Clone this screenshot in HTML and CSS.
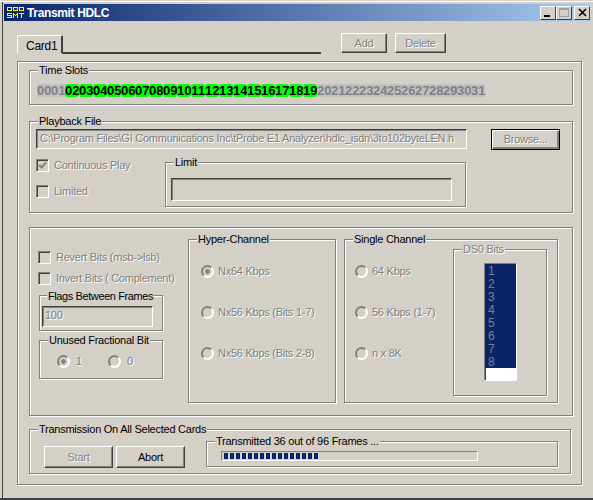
FILE: index.html
```html
<!DOCTYPE html>
<html lang="en">
<head>
<meta charset="utf-8">
<title>Transmit HDLC</title>
<link rel="stylesheet" href="styles.css">
</head>
<body>
<div class="window">
  <div class="titlebar">
    <svg class="logo" width="18" height="12" viewBox="0 0 18 12"><g fill="none" stroke="#ffff00" stroke-width="1"><rect x="0.5" y="0.5" width="4" height="3"/><rect x="6.5" y="0.5" width="4" height="3"/><rect x="12.5" y="0.5" width="4" height="3"/></g><path d="M0 6h5v1H1v1h4v3H0v-1h4V9H0zM6 6h1v1h1v1h1V7h1V6h1v5h-1V8H9v1H8V8H7v3H6zM12 6h5v1h-2v4h-1V7h-2z" fill="#ffff00"/></svg>
    <span class="title">Transmit HDLC</span>
    <div class="caption">
      <button class="cap"><span class="ic-min"></span></button>
      <button class="cap"><span class="ic-max"></span></button>
      <button class="cap cap-close"><svg width="9" height="9" viewBox="0 0 9 9"><path d="M1 1l7 7M8 1L1 8" stroke="#000" stroke-width="1.6" fill="none"/></svg></button>
    </div>
  </div>

  <div class="tabrow">
    <div class="tab">Card1</div>
    <div class="tabline"></div>
    <button class="btn dis btn-add">Add</button>
    <button class="btn dis btn-del">Delete</button>
  </div>

  <div class="pane etched">
    <section class="group g-time etched">
      <span class="label">Time Slots</span>
      <div class="slots">
        <span class="s off">00</span><span class="s off">01</span><span class="s on">02</span><span class="s on">03</span><span class="s on">04</span><span class="s on">05</span><span class="s on">06</span><span class="s on">07</span><span class="s on">08</span><span class="s on">09</span><span class="s on">10</span><span class="s on">11</span><span class="s on">12</span><span class="s on">13</span><span class="s on">14</span><span class="s on">15</span><span class="s on">16</span><span class="s on">17</span><span class="s on">18</span><span class="s on">19</span><span class="s off">20</span><span class="s off">21</span><span class="s off">22</span><span class="s off">23</span><span class="s off">24</span><span class="s off">25</span><span class="s off">26</span><span class="s off">27</span><span class="s off">28</span><span class="s off">29</span><span class="s off">30</span><span class="s off">31</span>
      </div>
    </section>

    <section class="group g-play etched">
      <span class="label">Playback File</span>
      <div class="play-top">
        <div class="input in-file dtext">C:\Program Files\GI Communications Inc\tProbe E1 Analyzer\hdlc_isdn\3to102byteLEN.h</div>
        <button class="btn dis btn-browse">Browse...</button>
      </div>
      <div class="play-bottom">
        <div class="checks">
          <div class="opt"><span class="cb"><svg width="9" height="9" viewBox="0 0 9 9"><path d="M1 4l2.5 2.5L8 1.500" stroke="#808080" stroke-width="2" fill="none"/></svg></span><span class="dtext">Continuous Play</span></div>
          <div class="opt"><span class="cb"></span><span class="dtext">Limited</span></div>
        </div>
        <div class="group g-limit etched">
          <span class="label">Limit</span>
          <div class="input in-limit"></div>
        </div>
      </div>
    </section>

    <section class="group g-opts etched">
      <div class="leftcol">
        <div class="opt"><span class="cb"></span><span class="dtext">Revert Bits (msb-&gt;lsb)</span></div>
        <div class="opt opt-2"><span class="cb"></span><span class="dtext">Invert Bits ( Complement)</span></div>
        <div class="group g-flags etched">
          <span class="label label-flags">Flags Between Frames</span>
          <div class="input in-flags dtext">100</div>
        </div>
        <div class="group g-unused etched">
          <span class="label">Unused Fractional Bit</span>
          <div class="fracs">
            <div class="opt opt-r1"><span class="rb sel"></span><span class="dtext">1</span></div>
            <div class="opt"><span class="rb"></span><span class="dtext">0</span></div>
          </div>
        </div>
      </div>
      <div class="group g-hyper etched">
        <span class="label">Hyper-Channel</span>
        <div class="radios">
          <div class="opt"><span class="rb sel"></span><span class="dtext">Nx64 Kbps</span></div>
          <div class="opt"><span class="rb"></span><span class="dtext">Nx56 Kbps (Bits 1-7)</span></div>
          <div class="opt"><span class="rb"></span><span class="dtext">Nx56 Kbps (Bits 2-8)</span></div>
        </div>
      </div>
      <div class="group g-single etched">
        <span class="label">Single Channel</span>
        <div class="radios r-single">
          <div class="opt"><span class="rb"></span><span class="dtext">64 Kbps</span></div>
          <div class="opt"><span class="rb"></span><span class="dtext">56 Kbps (1-7)</span></div>
          <div class="opt"><span class="rb"></span><span class="dtext">n x 8K</span></div>
        </div>
        <div class="group g-ds0 etched">
          <span class="label dtext">DS0 Bits</span>
          <ul class="list">
            <li>1</li><li>2</li><li>3</li><li>4</li><li>5</li><li>6</li><li>7</li><li>8</li>
          </ul>
        </div>
      </div>
    </section>

    <section class="group g-trans etched">
      <span class="label">Transmission On All Selected Cards</span>
      <button class="btn dis btn-start">Start</button>
      <button class="btn btn-abort">Abort</button>
      <div class="group g-prog etched">
        <span class="label">Transmitted 36 out of 96 Frames ...</span>
        <div class="progress"><div class="fill"></div></div>
      </div>
    </section>
  </div>
</div>
</body>
</html>
```
FILE: styles.css
```css
* { box-sizing: border-box; }
html, body { margin: 0; padding: 0; }
body {
  width: 593px;
  height: 500px;
  overflow: hidden;
  font-family: "Liberation Sans", Arial, sans-serif;
  font-size: 11px;
  letter-spacing: -0.25px;
  color: #000;
  background: #d4d0c8;
}
.window {
  width: 593px;
  height: 500px;
  padding: 4px 3px 0 3px;
  background: #d4d0c8;
  border-bottom: 2px solid #404040;
  box-shadow: inset 0 1px 0 #d4d0c8, inset 0 2px 0 #fff, inset 2px 0 0 #d4d0c8, inset 3px 0 0 #404040;
}
.titlebar {
  display: flex;
  align-items: center;
  height: 17px;
  margin-left: 1px;
  padding-left: 3px;
  background: linear-gradient(90deg, #0a246a, #a6caf0);
  color: #fff;
}
.logo { flex: none; }
.title { margin-left: 2px; font-weight: bold; font-size: 12px; letter-spacing: -0.35px; }
.caption { display: flex; margin-left: auto; }
.cap {
  display: flex;
  align-items: center;
  justify-content: center;
  width: 16px;
  height: 14px;
  padding: 0;
  border: 1px solid;
  border-color: #fff #404040 #404040 #fff;
  background: #d4d0c8;
}
.cap-close { margin-left: 2px; margin-right: 0; }
.ic-min { width: 6px; height: 2px; margin-top: 6px; margin-right: 2px; background: #000; }
.ic-max { width: 10px; height: 9px; border: 1px solid #a0a0a0; border-top-width: 2px; }

.tabrow {
  display: flex;
  align-items: flex-end;
  height: 21px;
  margin-top: 12px;
  margin-left: 14px;
}
.tab {
  width: 46px;
  height: 19px;
  padding: 4px 0 0 8px;
  line-height: 13px;
  font-size: 12px;
  border: 1px solid;
  border-color: #fff #404040 transparent #fff;
  border-right-width: 2px;
  border-radius: 2px 2px 0 0;
}
.tabline {
  width: 258px;
  height: 2px;
  background: #404040;
  margin-bottom: 0;
}
.btn {
  padding: 0;
  border: 1px solid;
  border-color: #fff #404040 #404040 #fff;
  box-shadow: inset -1px -1px 0 #808080;
  background: #d4d0c8;
  font: inherit;
  letter-spacing: inherit;
  color: #000;
  line-height: 13px;
}
.dis { color: #808080; text-shadow: 1px 1px 0 #fff; }
.btn-add { width: 46px; height: 20px; margin-left: 20px; align-self: flex-start; }
.btn-del { width: 51px; height: 20px; margin-left: 8px; align-self: flex-start; }

.etched {
  border: 1px solid #808080;
  box-shadow: 1px 1px 0 #fff, inset 1px 1px 0 #fff;
}
.pane {
  width: 565px;
  height: 424px;
  margin-top: 7px;
  margin-left: 14px;
  padding: 8px 0 0 11px;
}
.group { position: relative; }
.label {
  position: absolute;
  top: -7px;
  left: 8px;
  padding: 0 1px;
  background: #d4d0c8;
  line-height: 13px;
  white-space: nowrap;
}
.label-flags { top: -6px; left: 7px; letter-spacing: -0.4px; }
.dtext { color: #808080; text-shadow: 1px 1px 0 #fff; white-space: nowrap; }

.g-time { width: 544px; height: 35px; }
.slots {
  display: flex;
  margin: 13px 0 0 7px;
  font-weight: bold;
  font-size: 13px;
  letter-spacing: 0;
  line-height: 13px;
}
.s { width: 14px; height: 13px; text-align: center; }
.s.off { background: #c0c0c0; color: #808080; }
.s.on { background: #00ff00; color: #000; border-radius: 3px; }

.g-play { width: 544px; height: 92px; margin-top: 16px; }
.play-top { display: flex; align-items: flex-start; margin: 7px 0 0 6px; }
.input {
  border: 1px solid;
  border-color: #404040 #fff #fff #404040;
  box-shadow: inset 1px 1px 0 #808080;
  line-height: 17px;
  overflow: hidden;
}
.in-file { width: 431px; height: 20px; padding-left: 3px; }
.btn-browse {
  width: 69px;
  height: 21px;
  margin-left: 24px;
  outline: 1px solid #000;
  outline-offset: -1px;
  border-color: #fff #404040 #404040 #fff;
  box-shadow: inset 1px 1px 0 #fff, inset -2px -2px 0 #808080;
}
.play-bottom { display: flex; align-items: flex-start; margin: 9px 0 0 6px; }
.checks { display: flex; flex-direction: column; gap: 13px; width: 129px; }
.opt { display: flex; align-items: center; height: 13px; line-height: 13px; }
.cb {
  flex: none;
  display: flex;
  align-items: center;
  justify-content: center;
  width: 13px;
  height: 13px;
  margin-right: 5px;
  border: 1px solid;
  border-color: #808080 #fff #fff #808080;
  box-shadow: inset 1px 1px 0 #404040;
}
.rb {
  flex: none;
  width: 13px;
  height: 13px;
  margin-right: 4px;
  border: 2px solid;
  border-color: #808080 #fff #fff #808080;
  border-radius: 50%;
}
.rb.sel { background: radial-gradient(circle, #808080 0 2px, #d4d0c8 2.5px); }
.g-limit { width: 301px; height: 45px; margin-top: 3px; }
.in-limit { width: 281px; height: 23px; margin: 15px 0 0 5px; }

.g-opts {
  display: flex;
  align-items: flex-start;
  width: 544px;
  height: 189px;
  margin-top: 14px;
}
.leftcol { width: 150px; margin-left: 8px; padding-top: 23px; flex: none; }
.opt-2 { margin-top: 8px; }
.g-flags { width: 124px; height: 36px; margin: 10px 0 0 1px; }
.in-flags { width: 111px; height: 21px; margin: 10px 0 0 2px; padding-left: 2px; }
.g-unused { width: 124px; height: 39px; margin: 9px 0 0 1px; }
.fracs { display: flex; margin: 14px 0 0 17px; }
.opt-r1 { width: 51px; }
.opt-r1 .rb, .fracs .rb { margin-right: 6px; }
.g-hyper { width: 148px; height: 164px; margin-top: 11px; flex: none; }
.radios {
  display: flex;
  flex-direction: column;
  gap: 28px;
  padding: 25px 0 0 12px;
}
.g-single {
  display: flex;
  align-items: flex-start;
  width: 214px;
  height: 164px;
  margin: 11px 0 0 8px;
  flex: none;
}
.r-single { width: 108px; flex: none; padding-left: 10px; }
.g-ds0 { width: 94px; height: 147px; margin-top: 9px; flex: none; }
.list {
  width: 33px;
  height: 118px;
  margin: 13px 0 0 30px;
  padding: 0;
  list-style: none;
  border: 1px solid;
  border-color: #808080 #fff #fff #808080;
  background: #fff;
  box-shadow: inset 1px 0 0 #404040;
}
.list li {
  height: 13px;
  padding: 1px 0 0 3px;
  line-height: 13px;
  font-size: 12px;
  background: #0a246a;
  color: #808080;
}

.g-trans { display: flex; align-items: flex-start; width: 542px; height: 45px; margin-top: 13px; }
.btn-start, .btn-abort { width: 69px; height: 22px; margin-top: 16px; flex: none; }
.btn-start { margin-left: 14px; }
.btn-abort { margin-left: 3px; }
.g-prog { width: 352px; height: 26px; margin: 11px 0 0 21px; flex: none; }
.progress {
  width: 257px;
  height: 10px;
  margin: 9px 0 0 14px;
  padding: 1px 0 0 1px;
  border: 1px solid;
  border-color: #808080 #fff #fff #808080;
}
.fill {
  width: 94px;
  height: 6px;
  margin-left: 1px;
  background: repeating-linear-gradient(90deg, #0a246a 0 4px, transparent 4px 6px);
}
```
